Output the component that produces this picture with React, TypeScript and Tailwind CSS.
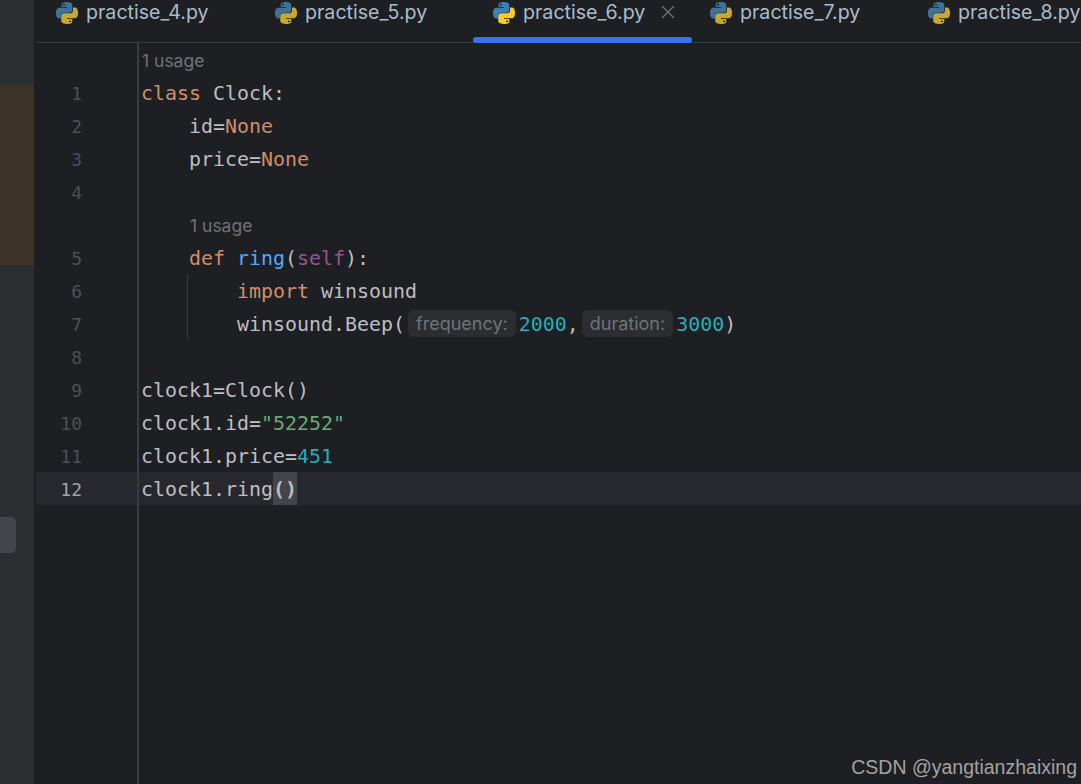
import { X } from "lucide-react";

const C = {
  kw: "text-[#cf8e6d]",
  txt: "text-[#bcbec4]",
  num: "text-[#2aacb8]",
  str: "text-[#6aab73]",
  fn: "text-[#56a8f5]",
  self: "text-[#94558d]",
};

type Token = { t: string; c?: string; hint?: boolean; match?: boolean };
type Row = { num?: number; usage?: boolean; indent: number; guide?: boolean; active?: boolean; tokens: Token[] };

const rows: Row[] = [
  { usage: true, indent: 0, tokens: [{ t: "1 usage" }] },
  { num: 1, indent: 0, tokens: [{ t: "class ", c: C.kw }, { t: "Clock:" }] },
  { num: 2, indent: 48, tokens: [{ t: "id=" }, { t: "None", c: C.kw }] },
  { num: 3, indent: 48, tokens: [{ t: "price=" }, { t: "None", c: C.kw }] },
  { num: 4, indent: 0, tokens: [] },
  { usage: true, indent: 48, tokens: [{ t: "1 usage" }] },
  {
    num: 5,
    indent: 48,
    tokens: [{ t: "def ", c: C.kw }, { t: "ring", c: C.fn }, { t: "(" }, { t: "self", c: C.self }, { t: "):" }],
  },
  { num: 6, indent: 96, guide: true, tokens: [{ t: "import ", c: C.kw }, { t: "winsound" }] },
  {
    num: 7,
    indent: 96,
    guide: true,
    tokens: [
      { t: "winsound.Beep(" },
      { t: "frequency:", hint: true },
      { t: "2000", c: C.num },
      { t: "," },
      { t: "duration:", hint: true },
      { t: "3000", c: C.num },
      { t: ")" },
    ],
  },
  { num: 8, indent: 0, tokens: [] },
  { num: 9, indent: 0, tokens: [{ t: "clock1=Clock()" }] },
  { num: 10, indent: 0, tokens: [{ t: "clock1.id=" }, { t: '"52252"', c: C.str }] },
  { num: 11, indent: 0, tokens: [{ t: "clock1.price=" }, { t: "451", c: C.num }] },
  { num: 12, indent: 0, active: true, tokens: [{ t: "clock1.ring" }, { t: "()", match: true }] },
];

function PythonIcon({ dim }: { dim?: boolean }) {
  return (
    <svg viewBox="0 0 24 24" className="w-[22px] h-[22px] shrink-0">
      <path
        fill={dim ? "#3f7299" : "#3d7fb5"}
        d="M11.914 0C5.82 0 6.2 2.656 6.2 2.656l.007 2.752h5.814v.826H3.9S0 5.789 0 11.969c0 6.18 3.403 5.96 3.403 5.96h2.03v-2.867s-.109-3.42 3.35-3.42h5.766s3.24.052 3.24-3.148V3.202S18.28 0 11.913 0zM8.708 1.85c.578 0 1.046.47 1.046 1.052 0 .581-.468 1.051-1.046 1.051-.579 0-1.046-.47-1.046-1.051 0-.582.467-1.052 1.046-1.052z"
      />
      <path
        fill={dim ? "#c9a82e" : "#fbcb26"}
        d="M12.087 24c6.092 0 5.712-2.656 5.712-2.656l-.007-2.752h-5.814v-.826h8.123s3.9.445 3.9-5.735c0-6.18-3.404-5.96-3.404-5.96h-2.03v2.867s.109 3.42-3.35 3.42H8.95s-3.24-.052-3.24 3.148v5.292S5.72 24 12.087 24zm3.206-1.85c-.578 0-1.046-.47-1.046-1.052 0-.581.468-1.051 1.046-1.051.579 0 1.046.47 1.046 1.051 0 .582-.467 1.052-1.046 1.052z"
      />
    </svg>
  );
}

function Tab({ name, active, width }: { name: string; active?: boolean; width: string }) {
  return (
    <div className={`relative ${width} shrink-0 h-[43px] pl-[20px] pt-px flex items-start gap-[8px]`}>
      <div className="mt-px">
        <PythonIcon dim={!active} />
      </div>
      <span className="text-[19.6px] leading-[22px] text-[#a9bccb]">{name}</span>
      {active && <X className="w-[22px] h-[22px] ml-[4px] shrink-0 text-[#6f737a]" strokeWidth={1.5} />}
      {active && <div className="absolute left-0 right-[-2px] top-[37px] h-[6px] rounded-[3px] bg-[#3574f0]" />}
    </div>
  );
}

function CodeRow({ row }: { row: Row }) {
  return (
    <div className={`flex h-[33px] ${row.active ? "bg-[#26282e]" : ""}`}>
      <div
        className={`w-[101px] shrink-0 pr-[55px] text-right font-['DejaVu_Sans_Mono',monospace] text-[18px] leading-[35px] ${
          row.active ? "text-[#a1a3ab]" : "text-[#4b5059]"
        }`}
      >
        {row.num}
      </div>
      <div className="w-[2px] shrink-0 bg-[#393b40]" />
      <div className="flex-1 flex pl-[2px] whitespace-pre">
        {row.guide ? (
          <>
            <div className="w-[46px] shrink-0" />
            <div className="w-px shrink-0 bg-[#393b40]" />
            <div className="w-[49px] shrink-0" />
          </>
        ) : (
          <div className="shrink-0" style={{ width: row.indent }} />
        )}
        {row.usage ? (
          <span className="ml-px text-[17.5px] leading-[35px] text-[#6f737a]">{row.tokens[0].t}</span>
        ) : (
          <div className="flex items-start font-['DejaVu_Sans_Mono',monospace] text-[19.95px] leading-[35px] text-[#bcbec4]">
            {row.tokens.map((tok, i) =>
              tok.hint ? (
                <span
                  key={i}
                  className="font-['Inter',sans-serif] mx-[3px] mt-[3px] h-[27px] px-[8px] rounded-[6px] bg-[#2b2d30] text-[#6f737a] text-[18px] leading-[27px]"
                >
                  {tok.t}
                </span>
              ) : tok.match ? (
                <span key={i} className="h-[33px] bg-[#43454a] font-bold">
                  {tok.t}
                </span>
              ) : (
                <span key={i} className={tok.c}>
                  {tok.t}
                </span>
              ),
            )}
          </div>
        )}
      </div>
    </div>
  );
}

export default function App() {
  return (
    <div className="relative flex h-[784px] w-[1081px] overflow-hidden bg-[#1e1f22] font-['Inter',sans-serif]">
      {/* tool strip */}
      <div className="w-[34px] shrink-0 flex flex-col bg-[#2b2d30]">
        <div className="h-[85px]" />
        <div className="h-[180px] bg-[#3d3226]" />
        <div className="mt-[252px] w-[16px] h-[36px] rounded-r-[5px] bg-[#43454a]" />
      </div>

      <div className="flex-1 min-w-0 flex flex-col pl-[2px]">
        {/* tabs */}
        <div className="flex h-[43px] shrink-0 border-b border-[#393b40]">
          <Tab name="practise_4.py" width="w-[219px]" />
          <Tab name="practise_5.py" width="w-[218px]" />
          <Tab name="practise_6.py" width="w-[217px]" active />
          <Tab name="practise_7.py" width="w-[218px]" />
          <Tab name="practise_8.py" width="w-[218px]" />
        </div>

        {/* editor */}
        <div className="flex-1 flex flex-col">
          {rows.map((r, i) => (
            <CodeRow key={i} row={r} />
          ))}
          <div className="flex-1 flex">
            <div className="w-[101px] shrink-0" />
            <div className="w-[2px] shrink-0 bg-[#393b40]" />
          </div>
        </div>
      </div>

      <div className="absolute right-[4px] bottom-[6px] font-['Liberation_Sans',sans-serif] text-[19.5px] leading-[22px] text-[#a3a3a3]">
        CSDN @yangtianzhaixing
      </div>
    </div>
  );
}
